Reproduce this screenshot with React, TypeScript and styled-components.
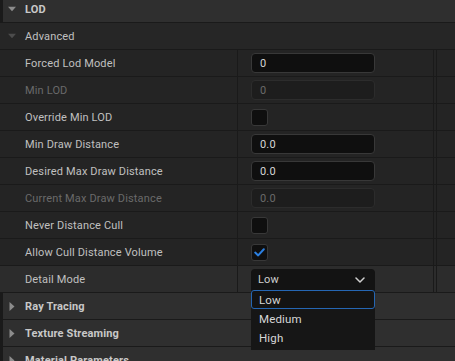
import React from "react";
import styled, { createGlobalStyle } from "styled-components";

const GlobalStyle = createGlobalStyle`
  html, body {
    margin: 0;
    padding: 0;
    background: #1a1a1a;
  }
  body {
    font-family: Roboto, "Noto Sans", "Liberation Sans", sans-serif;
    font-size: 11px;
    letter-spacing: 0.15px;
    color: #c0c0c0;
  }
`;

const Panel = styled.div`
  width: 455px;
  height: 361px;
  overflow: hidden;
  background: #1a1a1a;
`;

// list is scrolled a few pixels down, like the editor panel in the shot
const Scroller = styled.div`
  margin-top: -4px;
  display: flex;
  flex-direction: column;
`;

const CategoryRow = styled.div`
  height: 26px;
  margin-bottom: 1px;
  margin-left: 3px;
  background: #2f2f2f;
  display: flex;
  align-items: center;
  padding-left: 5px;
  gap: 9px;
  font-weight: 700;
  color: #c8c8c8;
`;

const SubCategoryRow = styled.div`
  height: 26px;
  margin-bottom: 1px;
  background: #262626;
  display: flex;
  align-items: center;
  padding-left: 8px;
  gap: 9px;
  color: #c0c0c0;
`;

const Arrow = styled.span<{ $dim?: boolean }>`
  width: 8px;
  height: 8px;
  display: flex;
  align-items: center;
  justify-content: center;
  color: ${(p) => (p.$dim ? "#4c4c4c" : "#8c8c8c")};
`;

const PropRow = styled.div`
  height: 26px;
  margin-bottom: 1px;
  display: grid;
  grid-template-columns: 237px 1px 195px 1px 2px 1px 18px;
  background: #1a1a1a;
`;

const Cell = styled.div<{ $hover?: boolean }>`
  background: ${(p) => (p.$hover ? "#2c2c2c" : "#242424")};
  display: flex;
  align-items: center;
`;

const NameCell = styled(Cell)`
  padding-left: 25px;
`;

const ValueCell = styled(Cell)`
  padding-left: 13px;
  position: relative;
`;

const Label = styled.span<{ $disabled?: boolean }>`
  color: ${(p) => (p.$disabled ? "#6a6a6a" : "#c0c0c0")};
  white-space: nowrap;
`;

const NumberBox = styled.div<{ $disabled?: boolean }>`
  box-sizing: border-box;
  width: 124px;
  height: 20px;
  border-radius: 4px;
  background: ${(p) => (p.$disabled ? "#1d1d1d" : "#0f0f0f")};
  border: 1px solid ${(p) => (p.$disabled ? "#2c2c2c" : "#383838")};
  color: ${(p) => (p.$disabled ? "#6a6a6a" : "#d6d6d6")};
  display: flex;
  align-items: center;
  padding-left: 8px;
`;

const CheckBox = styled.div`
  box-sizing: border-box;
  width: 17px;
  height: 17px;
  border-radius: 3px;
  background: #0f0f0f;
  border: 1px solid #383838;
  display: flex;
  align-items: center;
  justify-content: center;
`;

const ComboButton = styled.div`
  box-sizing: border-box;
  width: 124px;
  height: 21px;
  margin-top: 1px;
  border-radius: 4px 4px 0 0;
  background: #131313;
  display: flex;
  align-items: center;
  justify-content: space-between;
  padding: 0 10px 0 7px;
  color: #d0d0d0;
`;

const Menu = styled.div`
  position: absolute;
  left: 13px;
  top: 24px;
  width: 124px;
  box-sizing: border-box;
  background: #161616;
  display: flex;
  flex-direction: column;
  padding-bottom: 3px;
  z-index: 5;
`;

const MenuItem = styled.div<{ $active?: boolean }>`
  box-sizing: border-box;
  height: 19px;
  display: flex;
  align-items: center;
  padding-left: 7px;
  color: #d6d6d6;
  font-size: 11.5px;
  border: 1px solid ${(p) => (p.$active ? "#2566b3" : "transparent")};
  border-radius: 3px;
  background: ${(p) => (p.$active ? "#131313" : "transparent")};
`;

const DownTri = ({ dim }: { dim?: boolean }) => (
  <Arrow $dim={dim}>
    <svg width="9" height="6" viewBox="0 0 9 6">
      <path d="M0 0.5 L9 0.5 L4.5 5.5 Z" fill="currentColor" />
    </svg>
  </Arrow>
);

const RightTri = () => (
  <Arrow>
    <svg width="6" height="9" viewBox="0 0 6 9">
      <path d="M0.5 0 L5.5 4.5 L0.5 9 Z" fill="currentColor" />
    </svg>
  </Arrow>
);

const Check = () => (
  <svg width="11" height="9" viewBox="0 0 11 9">
    <path
      d="M1.2 4.6 L4.2 7.4 L9.8 1.3"
      fill="none"
      stroke="#2b7fe0"
      strokeWidth="2"
      strokeLinecap="round"
      strokeLinejoin="round"
    />
  </svg>
);

const Chevron = () => (
  <svg width="10" height="6" viewBox="0 0 10 6">
    <path
      d="M1 1 L5 5 L9 1"
      fill="none"
      stroke="#d0d0d0"
      strokeWidth="1.5"
      strokeLinecap="round"
      strokeLinejoin="round"
    />
  </svg>
);

type Prop = {
  name: string;
  kind: "number" | "check" | "combo";
  value?: string;
  checked?: boolean;
  disabled?: boolean;
  hover?: boolean;
};

const props: Prop[] = [
  { name: "Forced Lod Model", kind: "number", value: "0" },
  { name: "Min LOD", kind: "number", value: "0", disabled: true },
  { name: "Override Min LOD", kind: "check" },
  { name: "Min Draw Distance", kind: "number", value: "0.0" },
  { name: "Desired Max Draw Distance", kind: "number", value: "0.0" },
  { name: "Current Max Draw Distance", kind: "number", value: "0.0", disabled: true },
  { name: "Never Distance Cull", kind: "check" },
  { name: "Allow Cull Distance Volume", kind: "check", checked: true },
  { name: "Detail Mode", kind: "combo", value: "Low", hover: true },
];

const PropertyRow = ({ p }: { p: Prop }) => (
  <PropRow>
    <NameCell $hover={p.hover}>
      <Label $disabled={p.disabled}>{p.name}</Label>
    </NameCell>
    <span />
    <ValueCell $hover={p.hover}>
      {p.kind === "number" && <NumberBox $disabled={p.disabled}>{p.value}</NumberBox>}
      {p.kind === "check" && <CheckBox>{p.checked && <Check />}</CheckBox>}
      {p.kind === "combo" && (
        <>
          <ComboButton>
            <span>{p.value}</span>
            <Chevron />
          </ComboButton>
          <Menu>
            <MenuItem $active>Low</MenuItem>
            <MenuItem>Medium</MenuItem>
            <MenuItem>High</MenuItem>
          </Menu>
        </>
      )}
    </ValueCell>
    <span />
    <Cell $hover={p.hover} />
    <span />
    <Cell $hover={p.hover} />
  </PropRow>
);

export default function App() {
  return (
    <>
      <GlobalStyle />
      <Panel>
        <Scroller>
          <CategoryRow>
            <DownTri />
            <span>LOD</span>
          </CategoryRow>
          <SubCategoryRow>
            <DownTri dim />
            <span>Advanced</span>
          </SubCategoryRow>
          {props.map((p) => (
            <PropertyRow key={p.name} p={p} />
          ))}
          <CategoryRow>
            <RightTri />
            <span>Ray Tracing</span>
          </CategoryRow>
          <CategoryRow>
            <RightTri />
            <span>Texture Streaming</span>
          </CategoryRow>
          <CategoryRow>
            <RightTri />
            <span>Material Parameters</span>
          </CategoryRow>
        </Scroller>
      </Panel>
    </>
  );
}
